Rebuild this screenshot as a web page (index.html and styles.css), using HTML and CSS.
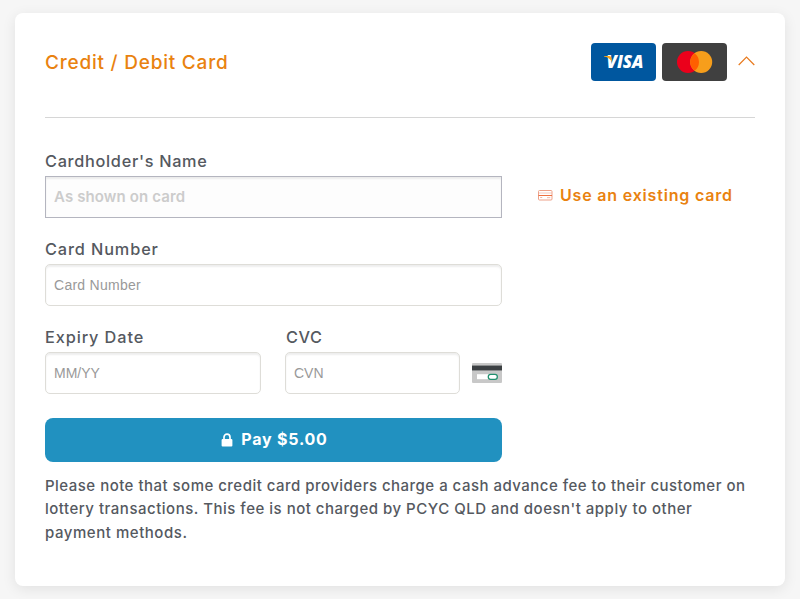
FILE: index.html
```html
<!DOCTYPE html>
<html lang="en">
<head>
<meta charset="utf-8">
<title>Credit / Debit Card</title>
<link rel="stylesheet" href="styles.css">
</head>
<body>
<main class="panel">
  <header class="panel-header">
    <h1 class="title"><span>Credit / Debit Card</span></h1>
    <div class="brands">
      <svg class="brand" viewBox="0 0 65 38" role="img" aria-label="Visa">
        <rect width="65" height="38" rx="4" fill="#00579f"/>
        <text class="visa" x="15.5" y="25" textLength="37" lengthAdjust="spacingAndGlyphs">VISA</text>
        <path d="M13 13h5.2q1.8 0 2.1 1.5l1 5q-1.8-4.8-8.3-6.1z" fill="#faa61a"/>
      </svg>
      <svg class="brand" viewBox="0 0 65 38" role="img" aria-label="Mastercard">
        <rect width="65" height="38" rx="4" fill="#404040"/>
        <circle cx="26" cy="19" r="11" fill="#eb001b"/>
        <circle cx="39.2" cy="19" r="11" fill="#f79e1b"/>
        <path d="M32.6 10.2a11 11 0 0 1 0 17.6a11 11 0 0 1 0-17.6z" fill="#ff5f00"/>
      </svg>
      <svg class="chevron" viewBox="0 0 17 10"><path d="M.7 9L8.5 1.2L16.3 9" fill="none" stroke="#e8791c" stroke-width="1.2"/></svg>
    </div>
  </header>
  <form class="form">
    <div class="fields">
      <div class="field">
        <label class="label l-name" for="name">Cardholder's Name</label>
        <input class="input input-name" id="name" placeholder="As shown on card">
      </div>
      <div class="field">
        <label class="label l-number" for="number">Card Number</label>
        <input class="input input-number" id="number" placeholder="Card Number">
      </div>
      <div class="row">
        <div class="field expiry">
          <label class="label l-expiry" for="expiry">Expiry Date</label>
          <input class="input" id="expiry" placeholder="MM/YY">
        </div>
        <div class="field cvc">
          <label class="label l-cvc" for="cvc">CVC</label>
          <input class="input" id="cvc" placeholder="CVN">
        </div>
        <svg class="cvc-card" viewBox="0 0 30 20">
          <rect width="30" height="20" rx="1" fill="#c8c8c8"/>
          <path d="M0 2h30v6H0z" fill="#8b8d8e"/>
          <path d="M0 3h30v4H0z" fill="#3c4043"/>
          <path d="M5 11.2h12v5H5z" fill="#fff"/>
          <rect x="16.3" y="11.3" width="9" height="5" rx="2.3" fill="#fff" stroke="#23906f" stroke-width="1.3"/>
        </svg>
      </div>
      <button class="pay" type="button">
        <svg class="lock" viewBox="0 0 12 14"><path d="M3 7V4.2a3 3 0 0 1 6 0V7" fill="none" stroke="#fff" stroke-width="1.7"/><rect x=".6" y="6" width="10.8" height="7.6" rx="1" fill="#fff"/></svg>
        <span class="pay-text">Pay $5.00</span>
      </button>
    </div>
    <a class="existing">
      <svg class="existing-icon" viewBox="0 0 15 11">
        <rect x=".5" y=".5" width="13.5" height="9.5" rx="1" fill="#fff" stroke="#eda189"/>
        <path d="M.5 3h13.5" stroke="#f0b3a0" stroke-width=".7"/>
        <path d="M.5 5.5h13.5" stroke="#ee7040" stroke-width="1"/>
        <path d="M2.2 7.5h2M9 7.7h3.3" stroke="#f0a58c" stroke-width=".8"/>
      </svg>
      <span class="existing-text">Use an existing card</span>
    </a>
  </form>
  <p class="note">
    <span class="line line-1">Please note that some credit card providers charge a cash advance fee to their customer on</span>
    <span class="line line-2">lottery transactions. This fee is not charged by PCYC QLD and doesn't apply to other</span>
    <span class="line line-3">payment methods.</span>
  </p>
</main>
</body>
</html>
```
FILE: styles.css
```css
* { box-sizing: border-box; }
body {
  margin: 0;
  padding: 13px 15px;
  height: 599px;
  overflow: hidden;
  background: #f6f6f6;
  color: #55595f;
  font-family: Inter, "Liberation Sans", sans-serif;
}
.panel {
  height: 573px;
  padding: 0 30px;
  border-radius: 8px;
  background: #fff;
  box-shadow: 0 3px 14px rgba(0, 0, 0, .085);
}
.panel-header {
  display: flex;
  justify-content: space-between;
  height: 105px;
  padding-top: 30px;
  border-bottom: 1px solid #d6d6d6;
}
.title {
  margin: 0;
  font-size: 19px;
  font-weight: 500;
  line-height: 40px;
  letter-spacing: .78px;
  color: #e9820f;
  white-space: nowrap;
}
.brands { display: flex; gap: 6px; }
.brand { width: 65px; height: 38px; }
.visa {
  font: italic 800 17px "Open Sans", sans-serif;
  fill: #fff;
}
.chevron { width: 17px; height: 10px; margin: 13px 0 0 5px; }
.form { display: flex; padding-top: 31px; }
.fields { width: 457px; }
.field { margin-bottom: 19px; }
.label {
  display: block;
  height: 27px;
  line-height: 24px;
  font-size: 16.3px;
  font-weight: 500;
  white-space: nowrap;
}
.l-name { letter-spacing: .7px; }
.l-number { letter-spacing: .88px; }
.l-expiry { letter-spacing: .9px; }
.l-cvc { padding-left: 1px; letter-spacing: .5px; }
.input {
  display: block;
  width: 100%;
  height: 42px;
  padding: 0 8px;
  border: 1px solid #deddd8;
  border-radius: 5px;
  background: #fff;
  box-shadow: inset 0 2px 2px rgba(0, 0, 0, .07);
  font: 14px "Liberation Sans", sans-serif;
}
.input::placeholder { color: #999; opacity: 1; }
.input-number { letter-spacing: .27px; }
.input-name {
  padding-bottom: 2px;
  border-color: #b4b5bf;
  border-radius: 0;
  background: #fdfdfd;
  font: 600 15px Inter, sans-serif;
  letter-spacing: .12px;
}
.input-name::placeholder { color: #ccc; }
.row { display: flex; }
.expiry { width: 216px; margin-right: 24px; }
.cvc { width: 175px; margin-right: 12px; }
.cvc-card { width: 30px; height: 20px; margin-top: 38px; }
.pay {
  display: flex;
  align-items: center;
  justify-content: center;
  width: 457px;
  height: 44px;
  margin-top: 5px;
  padding: 0 0 2px 2px;
  border: 0;
  border-radius: 8px;
  background: #2191c0;
  color: #fff;
  font: 700 16px Inter, sans-serif;
}
.lock { width: 12px; height: 14px; margin: 1px 8px 0 0; }
.pay-text { letter-spacing: .78px; }
.existing {
  display: flex;
  align-items: center;
  height: 24px;
  margin: 34px 0 0 36px;
  font-size: 16px;
  font-weight: 600;
  letter-spacing: .81px;
  color: #e9820f;
  white-space: nowrap;
}
.existing-icon { width: 15px; height: 11px; margin-right: 7px; }
.note {
  margin: 11.5px 0 0;
  font-size: 15px;
  font-weight: 500;
  line-height: 23.5px;
}
.line { display: block; white-space: nowrap; letter-spacing: .48px; }
.line-2 { letter-spacing: .505px; }
.line-3 { letter-spacing: .54px; }
```
